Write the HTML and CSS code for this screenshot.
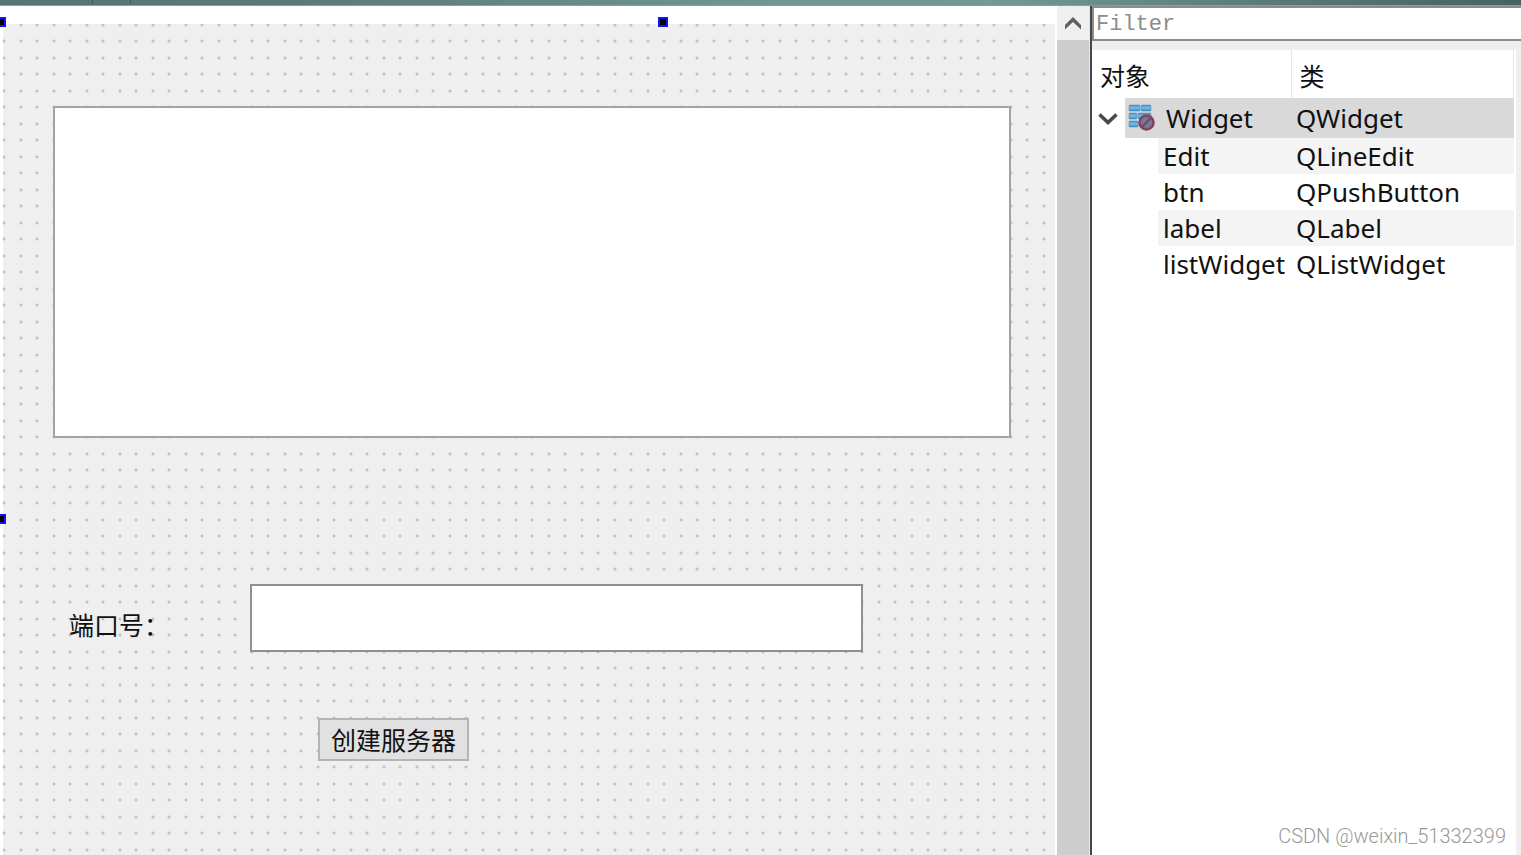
FILE: index.html
```html
<!DOCTYPE html>
<html lang="zh-CN">
<head>
<meta charset="utf-8">
<title>Widget</title>
<link rel="stylesheet" href="styles.css">
</head>
<body>
<div class="app">
  <div class="toolbar"></div>
  <div class="workspace">
    <main class="canvas">
      <form class="form">
        <div class="list-widget"></div>
        <div class="field">
          <label class="field-label" for="port">端口号：</label>
          <input class="field-input" id="port" type="text">
        </div>
        <button class="push-button" type="button">创建服务器</button>
      </form>
      <span class="handle handle-corner"></span>
      <span class="handle handle-top"></span>
      <span class="handle handle-left"></span>
    </main>
    <div class="scrollbar">
      <button class="scroll-up" type="button" aria-label="Scroll up">
        <svg width="16" height="13" viewBox="0 0 16 13"><path d="M0 8 8 0l8 8v4.500L8 5 0 12.500z" fill="#606060"/></svg>
      </button>
      <div class="scroll-thumb"></div>
    </div>
    <aside class="inspector">
      <input class="filter" type="text" placeholder="Filter" aria-label="Filter">
      <div class="tree">
        <table class="objects">
          <colgroup><col class="col-indent"><col class="col-branch"><col class="col-name"><col></colgroup>
          <thead>
            <tr><th colspan="3">对象</th><th class="class-head">类</th></tr>
          </thead>
          <tbody>
            <tr class="root">
              <td class="branch"><svg width="20" height="12" viewBox="0 0 20 12"><path d="M1.500 1.500 10 9.500l8.500-8" fill="none" stroke="#484848" stroke-width="3.600"/></svg></td>
              <td class="cell" colspan="2">
                <span class="object">
                  <svg width="28" height="28" viewBox="0 0 28 28">
                    <defs><linearGradient id="tile" x2="0" y2="1"><stop stop-color="#4192cf"/><stop offset=".5" stop-color="#78bced"/><stop offset="1" stop-color="#3c88be"/></linearGradient></defs>
                    <g fill="url(#tile)" stroke="#4b87b1" stroke-width=".5">
                      <rect x="1" y="1" width="11" height="6" rx="1"/><rect x="13" y="1" width="10" height="6" rx="1"/>
                      <rect x="1" y="9" width="8" height="6" rx="1"/><rect x="10" y="9" width="13" height="6" rx="1"/>
                      <rect x="1" y="17" width="9" height="6" rx="1"/>
                    </g>
                    <circle cx="18.500" cy="18.500" r="7" fill="#76789c" stroke="#80455f" stroke-width="2.600"/>
                    <path d="m14 23 9-9" stroke="#80455f" stroke-width="2.400"/>
                  </svg>
                  Widget
                </span>
              </td>
              <td class="class-name">QWidget</td>
            </tr>
            <tr class="striped"><td></td><td></td><td class="cell child">Edit</td><td class="class-name">QLineEdit</td></tr>
            <tr><td></td><td></td><td class="cell child">btn</td><td class="class-name">QPushButton</td></tr>
            <tr class="striped"><td></td><td></td><td class="cell child">label</td><td class="class-name">QLabel</td></tr>
            <tr><td></td><td></td><td class="cell child">listWidget</td><td class="class-name">QListWidget</td></tr>
          </tbody>
        </table>
        <div class="watermark">CSDN @weixin_51332399</div>
      </div>
    </aside>
  </div>
</div>
</body>
</html>
```
FILE: styles.css
```css
* { box-sizing: border-box; }

body {
  margin: 0;
  background: #efefef;
  color: #111;
  font-family: "Noto Sans", "Noto Sans CJK SC", sans-serif;
}

.app {
  display: flex;
  flex-direction: column;
  min-height: 100vh;
}

.toolbar {
  height: 6px;
  border-bottom: 1px solid #8f9c9c;
  background:
    linear-gradient(#3f5b5b, #3f5b5b) 92px 0 / 1px 4px no-repeat,
    linear-gradient(#3f5b5b, #3f5b5b) 130px 0 / 1px 4px no-repeat,
    linear-gradient(90deg, #567573, #5b7b79 20%, #709592 50%, #739996 65%, #5b7d7b 82%, #486260);
}

.workspace {
  display: flex;
  flex: 1;
}

.canvas {
  position: relative;
  display: flex;
  flex: 1;
  padding: 18px 2px 0 3px;
  background: #fff;
}

.form {
  --dot: radial-gradient(circle at 2px 2px, #bcbcbc 0, #c4c4c4 1px, transparent 2px);
  flex: 1;
  padding: 82px 44px 0 50px;
  background:
    var(--dot) -1px -1px / 33px 33px,
    var(--dot) 16px -1px / 33px 33px,
    var(--dot) -1px 15px / 33px 33px,
    var(--dot) 16px 15px / 33px 33px,
    #efefef;
}

.list-widget {
  height: 332px;
  border: 2px solid #a0a3a8;
  background: #fff;
}

.field {
  display: flex;
  align-items: center;
  margin: 146px 148px 66px 16px;
}

.field-label {
  width: 181px;
  padding-top: 12px;
  font: 25px/36px "Noto Sans CJK SC", sans-serif;
}

.field-input {
  flex: 1;
  min-width: 0;
  height: 68px;
  padding: 0 8px;
  border: 2px solid #909090;
  background: #fff;
  font: 25px "Noto Sans CJK SC", sans-serif;
}

.push-button {
  display: block;
  height: 43px;
  margin-left: 265px;
  padding: 0 11px 2px;
  border: 2px solid #b4b4b4;
  background: #e1e1e1;
  color: #111;
  font: 25px/36px "Noto Sans CJK SC", sans-serif;
}

.handle {
  position: absolute;
  width: 10px;
  height: 10px;
  border: 2px solid #11f;
  background: #000;
}

.handle-corner { top: 11px; left: -4px; }
.handle-top { top: 11px; left: calc(62% + 3px); }
.handle-left { top: 508px; left: -4px; }

.scrollbar {
  display: flex;
  flex-direction: column;
  width: 33px;
  border-right: 1px solid #e8e8e8;
}

.scroll-up {
  display: grid;
  place-items: center;
  height: 34px;
  padding: 0;
  border: 0;
  background: #efefef;
}

.scroll-thumb {
  flex: 1;
  background: #cdcdcd;
}

.inspector {
  display: flex;
  flex-direction: column;
  width: 431px;
  border-left: 2px solid #48484a;
}

.filter {
  height: 35px;
  padding: 2px 2px 0;
  border: 2px solid #8c8c8c;
  border-right: 0;
  background: #fff;
  font: 22px "Liberation Mono", monospace;
}

.filter::placeholder { color: #8c8c8c; opacity: 1; }

.tree {
  display: flex;
  flex: 1;
  flex-direction: column;
  justify-content: space-between;
  margin: 9px 5px 0 0;
  padding-right: 2px;
  background: #fff;
}

.objects {
  width: 100%;
  border-collapse: collapse;
  table-layout: fixed;
  font-size: 26px;
  line-height: 36px;
}

.col-indent { width: 33px; }
.col-branch { width: 33px; }
.col-name { width: 133px; }

.objects th {
  height: 48px;
  padding: 2px 8px 0;
  border-right: 1px solid #e6e6e6;
  font: 25px/36px "Noto Sans CJK SC", sans-serif;
  text-align: left;
}

.objects td {
  height: 36px;
  padding: 0;
  white-space: nowrap;
}

.objects .root td { height: 40px; }
.objects .branch { padding: 0 2px 4px 0; text-align: center; }
.objects .branch svg { display: inline-block; vertical-align: middle; }
.objects .child { padding-left: 5px; }
.objects .class-name { padding-left: 5px; }

.root .cell, .root .class-name { background: #d9d9d9; }
.striped .cell, .striped .class-name { background: #f4f4f4; }

.object {
  display: flex;
  align-items: center;
  gap: 10px;
  padding-left: 3px;
}

.watermark {
  padding: 0 8px 5px;
  color: #999;
  font: 300 20px/28px Roboto, sans-serif;
  text-align: right;
}
```
